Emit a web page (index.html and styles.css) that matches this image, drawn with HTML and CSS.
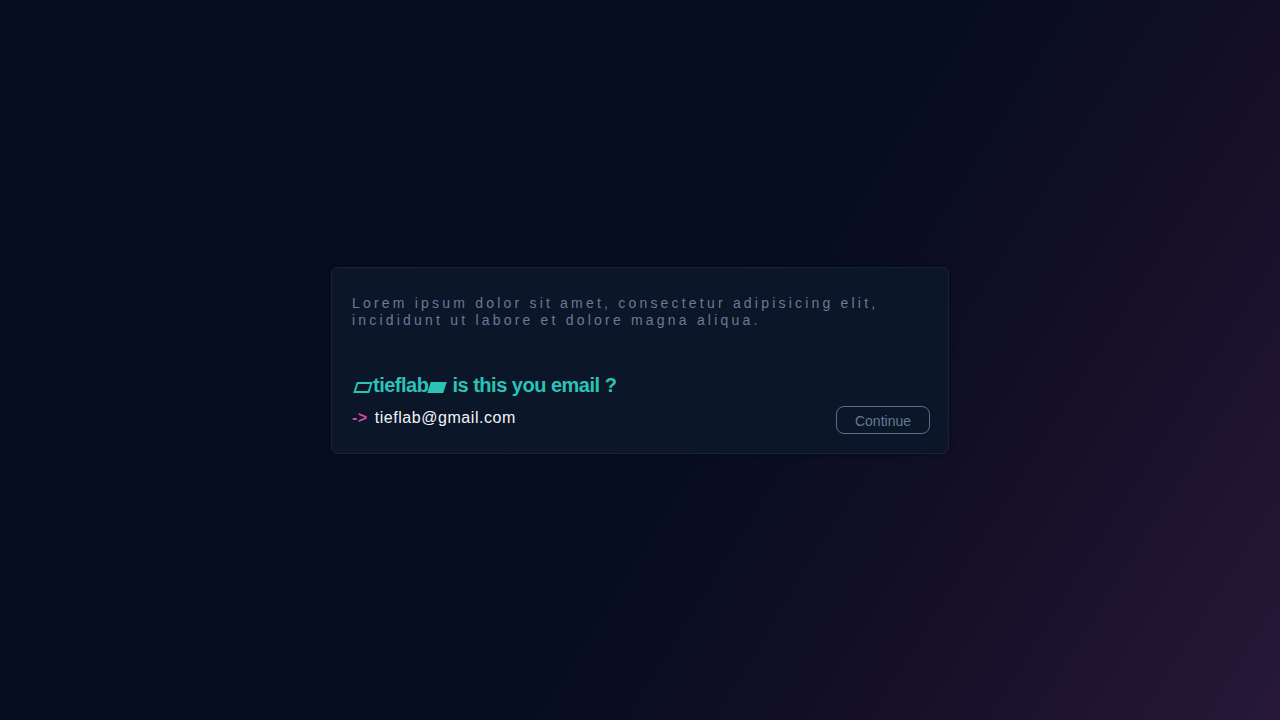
FILE: index.html
```html
<!DOCTYPE html>
<html lang="en">
<head>
<meta charset="utf-8">
<title>Email check</title>
<link rel="stylesheet" href="styles.css">
</head>
<body>
<main class="stage">
  <section class="card">
    <p class="intro">Lorem ipsum dolor sit amet, consectetur adipisicing elit,<br>incididunt ut labore et dolore magna aliqua.</p>
    <div class="bottom">
      <div class="info">
        <h1 class="question"><span class="para para-open" aria-label="▱"></span>tieflab<span class="para para-fill" aria-label="▰"></span> is this you email ?</h1>
        <div class="email"><span class="arrow">-&gt;</span> tieflab@gmail.com</div>
      </div>
      <button class="continue" type="button">Continue</button>
    </div>
  </section>
</main>
</body>
</html>
```
FILE: styles.css
```css
* { box-sizing: border-box; }
html, body { margin: 0; height: 100%; }
body {
  font-family: "Liberation Sans", Arial, sans-serif;
  background: linear-gradient(122deg, #050c1e 0%, #060d20 55%, #140f26 75%, #271839 100%);
  background-color: #050c1e;
}
.stage {
  height: 720px;
  display: flex;
  align-items: center;
  justify-content: center;
}
.card {
  width: 618px;
  height: 187px;
  background: #0b1628;
  border: 1px solid #172438;
  border-radius: 6px;
  box-shadow: 0 0 6px rgba(0, 0, 0, 0.35);
  padding: 27px 18px 19px 20px;
  display: flex;
  flex-direction: column;
  justify-content: space-between;
}
.intro {
  margin: 0;
  font-size: 14px;
  line-height: 17px;
  letter-spacing: 3.2px;
  color: #6a7a96;
}
.bottom {
  display: flex;
  align-items: flex-end;
  justify-content: space-between;
}
.info {
  margin-bottom: 7px;
}
.question {
  margin: 0 0 11px;
  font-size: 20px;
  line-height: 24px;
  font-weight: bold;
  letter-spacing: -0.5px;
  color: #2bc3b6;
}
.para {
  display: inline-block;
  width: 16px;
  height: 11px;
  margin: 0 2px 0 3px;
  transform: skewX(-18deg);
  vertical-align: -1px;
}
.para-open {
  border: 2px solid #2bc3b6;
}
.para-fill {
  background: #2bc3b6;
  margin: 0 2px 0 1px;
}
.email {
  font-size: 16px;
  line-height: 19px;
  color: #f2f4f8;
  letter-spacing: 0.55px;
}
.arrow {
  color: #d44aa6;
  font-weight: bold;
  letter-spacing: 0.5px;
  margin-right: 2px;
}
.continue {
  width: 94px;
  height: 28px;
  background: transparent;
  border: 1px solid #5c6e8e;
  border-radius: 8px;
  color: #66789a;
  font-family: "Liberation Sans", Arial, sans-serif;
  font-size: 14px;
  padding: 2px 0 0;
}
```
